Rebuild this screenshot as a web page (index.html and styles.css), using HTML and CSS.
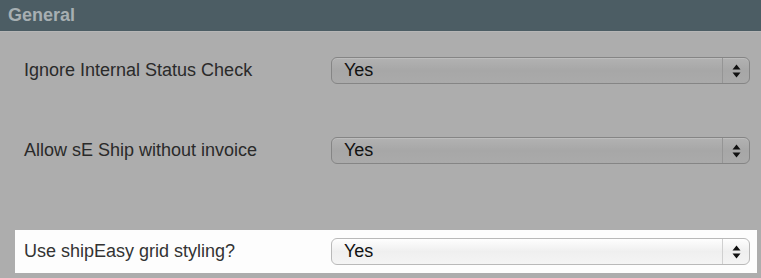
FILE: index.html
```html
<!DOCTYPE html>
<html>

<head>
  <title>General Settings</title>
  <meta name="viewport" content="width=device-width, initial-scale=1" />
  <link rel="stylesheet" href="styles.css">
</head>

<body>

  <div class="section-header">General</div>

  <div class="settings">
    <div class="row row-1">
      <div class="label">Ignore Internal Status Check</div>
      <div class="select">
        <span class="select-value">Yes</span>
        <span class="select-arrows">
          <svg width="9" height="14" viewBox="0 0 9 14"><path d="M4.5 0.5 L8.5 5.5 L0.5 5.5 Z M0.5 8.5 L8.5 8.5 L4.5 13.5 Z" /></svg>
        </span>
      </div>
    </div>

    <div class="row row-2">
      <div class="label">Allow sE Ship without invoice</div>
      <div class="select">
        <span class="select-value">Yes</span>
        <span class="select-arrows">
          <svg width="9" height="14" viewBox="0 0 9 14"><path d="M4.5 0.5 L8.5 5.5 L0.5 5.5 Z M0.5 8.5 L8.5 8.5 L4.5 13.5 Z" /></svg>
        </span>
      </div>
    </div>

    <div class="row row-3 highlight">
      <div class="label">Use shipEasy grid styling?</div>
      <div class="select">
        <span class="select-value">Yes</span>
        <span class="select-arrows">
          <svg width="9" height="14" viewBox="0 0 9 14"><path d="M4.5 0.5 L8.5 5.5 L0.5 5.5 Z M0.5 8.5 L8.5 8.5 L4.5 13.5 Z" /></svg>
        </span>
      </div>
    </div>
  </div>

</body>

</html>
```

FILE: styles.css
```css
html {
  background-color: #adadad;
}

body {
  margin: 0;
  padding: 0;
  font-family: "Liberation Sans", Arial, sans-serif;
  overflow: hidden;
}

.section-header {
  height: 31px;
  line-height: 30px;
  padding-left: 8px;
  background-color: #4c5d64;
  border-bottom: 1px solid #b6b6b6;
  color: #a7afb2;
  font-size: 18px;
  font-weight: bold;
}

.settings {
  padding: 0 4px 0 15px;
}

.row {
  display: flex;
  align-items: center;
  height: 43px;
  padding-left: 9px;
}

.row-1 {
  margin-top: 17px;
}

.row-2 {
  margin-top: 37px;
}

.row-3 {
  margin-top: 58px;
}

.label {
  width: 307px;
  font-size: 18px;
  color: #2a2a2a;
}

.select {
  display: flex;
  align-items: center;
  width: 419px;
  height: 27px;
  box-sizing: border-box;
  border: 1px solid #858585;
  border-radius: 6px;
  background-image: linear-gradient(180deg, #b2b2b2 0%, #a7a7a7 50%, #aaaaaa 100%);
  box-shadow: inset 0 1px 0 rgba(255, 255, 255, .15);
}

.select-value {
  flex: 1;
  padding-left: 12px;
  font-size: 18px;
  color: #111;
}

.select-arrows {
  display: flex;
  align-items: center;
  justify-content: center;
  width: 26px;
  height: 100%;
  border-left: 1px solid #959595;
}

.select-arrows svg {
  fill: #111;
}

/* spotlighted row */
.highlight {
  background-color: #fdfdfd;
}

.highlight .label {
  color: #333;
}

.highlight .select {
  border-color: #b9b9b9;
  background-image: linear-gradient(180deg, #fefefe 0%, #efefef 50%, #f4f4f4 100%);
}

.highlight .select-arrows {
  border-left-color: #d0d0d0;
}
```
